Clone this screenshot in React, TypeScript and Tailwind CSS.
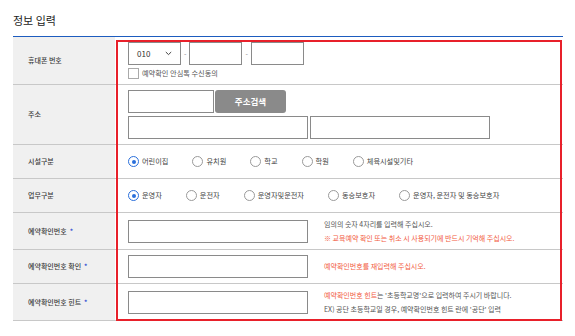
import React from "react";

const ORANGE = "text-[#f25c3f]";

function Row({ label, required, h, children }: { label: string; required?: boolean; h: string; children: React.ReactNode }) {
  return (
    <div className={`grid grid-cols-[102px_1fr] border-b border-[#c8c8c8] ${h}`}>
      <div className="flex items-center bg-[#f0f0f0] pl-[15px] text-[7px] font-medium text-[#3a3a3a]">
        {label}
        {required && <span className="ml-[3px] text-[#1e3fd0]">*</span>}
      </div>
      <div className="flex min-w-0 pl-[13px]">{children}</div>
    </div>
  );
}

function Radio({ label, checked }: { label: string; checked?: boolean }) {
  return (
    <label className="flex items-center gap-[3px] text-[7.2px] text-[#444]">
      {checked ? (
        <span className="flex h-[11px] w-[11px] items-center justify-center rounded-full border border-[#2a6fdb] bg-white">
          <span className="h-[4px] w-[4px] rounded-full bg-[#2a6fdb]" />
        </span>
      ) : (
        <span className="h-[11px] w-[11px] rounded-full border border-[#9a9a9a] bg-white" />
      )}
      {label}
    </label>
  );
}

function Box({ w }: { w: string }) {
  return <div className={`h-[23px] border border-[#8a8a8a] bg-white ${w}`} />;
}

export default function App() {
  return (
    <div className="relative h-[336px] w-[575px] bg-white font-['Noto_Sans_CJK_KR',sans-serif]">
      <div className="w-[563px] pl-[13px] pt-[12px]">
        <h2 className="h-[24px] text-[11px] leading-[16px] text-[#222]">정보 입력</h2>
        <div className="border-t border-[#1d5cbf]">
          <Row label="휴대폰 번호" h="h-[48px]">
            <div className="flex flex-col gap-[3px] pt-[5px]">
              <div className="flex items-center">
                <div className="flex h-[23px] w-[53px] items-center justify-between border border-[#8a8a8a] bg-white pl-[8px] pr-[8px]">
                  <span className="text-[8px] text-[#333]">010</span>
                  <svg width="7" height="5" viewBox="0 0 7 5" fill="none">
                    <path d="M0.8 1l2.7 2.6L6.2 1" stroke="#444" strokeWidth="1" />
                  </svg>
                </div>
                <span className="mx-[3px] text-[7px] text-[#888]">-</span>
                <Box w="w-[53px]" />
                <span className="mx-[3px] text-[7px] text-[#888]">-</span>
                <Box w="w-[53px]" />
              </div>
              <label className="flex items-center gap-[3px] text-[7.2px] text-[#555]">
                <span className="h-[11px] w-[11px] border border-[#aaa] bg-white" />
                예약확인 안심톡 수신동의
              </label>
            </div>
          </Row>
          <Row label="주소" h="h-[60px]">
            <div className="flex flex-col gap-[3px] pt-[5px]">
              <div className="flex gap-[1px]">
                <Box w="w-[86px]" />
                <button className="h-[23px] w-[71px] rounded-[3px] bg-[#8a8a8a] text-[8.5px] font-bold text-white">주소검색</button>
              </div>
              <div className="flex gap-[2px]">
                <Box w="w-[180px]" />
                <Box w="w-[180px]" />
              </div>
            </div>
          </Row>
          <Row label="시설구분" h="h-[34px]">
            <div className="flex items-center gap-[24px]">
              <Radio label="어린이집" checked />
              <Radio label="유치원" />
              <Radio label="학교" />
              <Radio label="학원" />
              <Radio label="체육시설및기타" />
            </div>
          </Row>
          <Row label="업무구분" h="h-[34px]">
            <div className="flex items-center gap-[24px]">
              <Radio label="운영자" checked />
              <Radio label="운전자" />
              <Radio label="운영자및운전자" />
              <Radio label="동승보호자" />
              <Radio label="운영자, 운전자 및 동승보호자" />
            </div>
          </Row>
          <Row label="예약확인번호" required h="h-[37px]">
            <div className="flex items-center gap-[16px]">
              <Box w="w-[180px]" />
              <div className="text-[7px] leading-[14px]">
                <p className="text-[#555]">임의의 숫자 4자리를 입력해 주십시오.</p>
                <p className={ORANGE}>※ 교육예약 확인 또는 취소 시 사용되기에 반드시 기억해 주십시오.</p>
              </div>
            </div>
          </Row>
          <Row label="예약확인번호 확인" required h="h-[34px]">
            <div className="flex items-center gap-[16px]">
              <Box w="w-[180px]" />
              <p className={`text-[7px] ${ORANGE}`}>예약확인번호를 재입력해 주십시오.</p>
            </div>
          </Row>
          <Row label="예약확인번호 힌트" required h="h-[37px]">
            <div className="flex items-center gap-[16px]">
              <Box w="w-[180px]" />
              <div className="text-[7px] leading-[14px] text-[#555]">
                <p>
                  <span className={ORANGE}>예약확인번호 힌트</span>는 '초등학교명'으로 입력하여 주시기 바랍니다.
                </p>
                <p>EX) 공단 초등학교일 경우, 예약확인번호 힌트 란에 '공단' 입력</p>
              </div>
            </div>
          </Row>
        </div>
      </div>
      <div className="pointer-events-none absolute left-[116px] top-[40px] h-[281px] w-[446px] border-2 border-[#e8202a]" />
    </div>
  );
}
